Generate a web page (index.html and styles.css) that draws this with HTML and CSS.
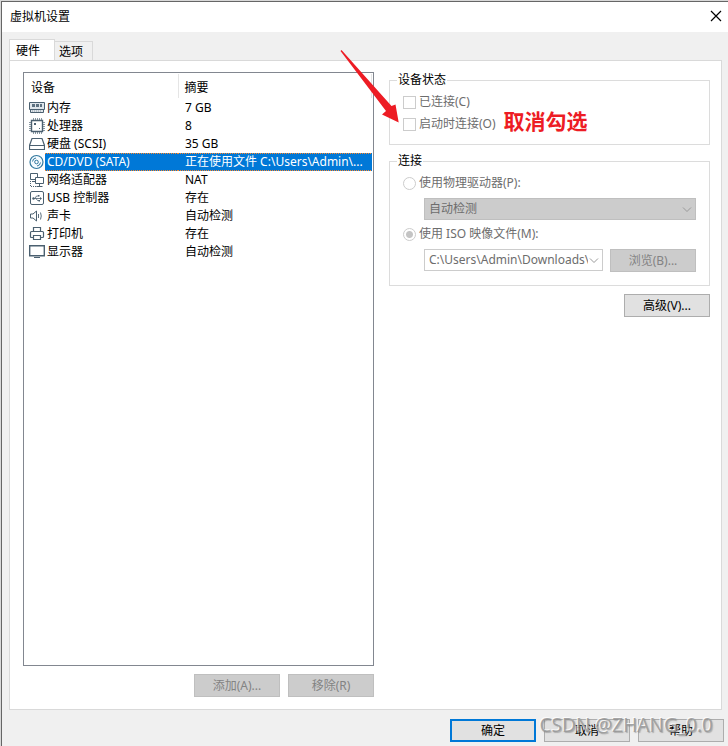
FILE: index.html
```html
<!DOCTYPE html>
<html lang="zh-CN">
<head>
<meta charset="utf-8">
<title>虚拟机设置</title>
<link rel="stylesheet" href="styles.css">
</head>
<body>
<div class="window">
  <header class="titlebar">
    <h1 class="title">虚拟机设置</h1>
    <button class="close" type="button" aria-label="关闭">
      <svg width="12" height="12" viewBox="0 0 12 12"><path d="M1 1l10 10M11 1L1 11" fill="none" stroke="#000" stroke-width="1.2"/></svg>
    </button>
  </header>

  <main class="body">
    <nav class="tabs">
      <button class="tab active" type="button">硬件</button>
      <button class="tab" type="button">选项</button>
    </nav>

    <div class="panel">
      <section class="devices">
        <div class="list">
          <table>
            <thead>
              <tr><th class="device">设备</th><th class="summary">摘要</th></tr>
            </thead>
            <tbody>
              <tr><td><div class="cell"><svg class="icon" viewBox="0 0 16 16"><path d="M.5 2.500h15v7H.5zM1.500 9.500v3h13v-3" fill="#dfe5ea" stroke="#4b6070"/><path d="M3 4h3v3H3zM7 4h3v3H7zM11 4h2v3h-2z" fill="#5d7180"/><path d="M3 11h10" stroke="#8d9ba6" stroke-dasharray="1 1"/></svg><span class="name">内存</span></div></td><td>7 GB</td></tr>
              <tr><td><div class="cell"><svg class="icon" viewBox="0 0 16 16"><path d="M4.500 0v16M6.500 0v16M8.500 0v16M10.500 0v16M12.500 0v16M0 4.500h16M0 6.500h16M0 8.500h16M0 10.500h16M0 12.500h16" stroke="#6c7d8a" stroke-width=".8"/><path d="M2.500 2.500h11v11h-11z" fill="#fff" stroke="#4b6070" stroke-width="1.400"/><path d="M5 5h2v2H5zM10 10h1v1h-1z" fill="#4b6070"/></svg><span class="name">处理器</span></div></td><td>8</td></tr>
              <tr><td><div class="cell"><svg class="icon" viewBox="0 0 16 16"><path d="M.5 9.500L3 2.500h10l2.500 7v4H.5zM.5 9.500h15" fill="#fff" stroke="#4b6070" stroke-width="1.200"/></svg><span class="name">硬盘 (SCSI)</span></div></td><td>35 GB</td></tr>
              <tr class="selected"><td><div class="cell"><svg class="icon" viewBox="0 0 16 16"><circle cx="7.500" cy="8" r="6.500" fill="#f5fbff" stroke="#33799f" stroke-width="1.200"/><circle cx="7.500" cy="8" r="1.800" fill="#fff" stroke="#33799f"/><path d="M3.500 7.500a4 4 0 0 1 3.500-3.500M11.500 8.500a4 4 0 0 1-3.500 3.500" fill="none" stroke="#33799f"/></svg><span class="name">CD/DVD (SATA)</span></div></td><td>正在使用文件 C:\Users\Admin\...</td></tr>
              <tr><td><div class="cell"><svg class="icon" viewBox="0 0 16 16"><path d="M1.500 1.500h7v6h-7zM3 9.500h3" fill="#fff" stroke="#4b6070"/><path d="M6.500 5.500h8v6h-8zM10.500 11.500v3M7.500 14.500h6" fill="#fff" stroke="#4b6070"/><path d="M1.500 9v5.500H7" fill="none" stroke="#4b6070" stroke-dasharray="1 1"/></svg><span class="name">网络适配器</span></div></td><td>NAT</td></tr>
              <tr><td><div class="cell"><svg class="icon" viewBox="0 0 16 16"><rect x="1.500" y="1.500" width="13" height="13" rx="1.500" fill="#fff" stroke="#4b6070"/><path d="M4 8.500h8M6 8.500l1.500-2.500h2M7 8.500l1.500 2h2" fill="none" stroke="#4b6070" stroke-width=".8"/><circle cx="4.500" cy="8.500" r="1.200" fill="#4b6070"/><path d="M11 7l2 1.500-2 1.500zM9 5h1.500v1.500H9zM9.500 10H11v1.500H9.500z" fill="#4b6070"/></svg><span class="name">USB 控制器</span></div></td><td>存在</td></tr>
              <tr><td><div class="cell"><svg class="icon" viewBox="0 0 16 16"><path d="M1.500 6H4l3.500-3v10L4 10H1.500z" fill="#fff" stroke="#4b6070"/><path d="M9.500 6v4M11.500 4.500q1.500 3.500 0 7" fill="none" stroke="#4b6070" stroke-width=".9"/></svg><span class="name">声卡</span></div></td><td>自动检测</td></tr>
              <tr><td><div class="cell"><svg class="icon" viewBox="0 0 16 16"><path d="M4.500 5.500v-4h7v4M4 11.500H2.500q-1 0-1-1v-4q0-1 1-1h11q1 0 1 1v4q0 1-1 1H12M4.500 9.500h7v4h-7z" fill="#fff" stroke="#4b6070" stroke-width="1.200"/></svg><span class="name">打印机</span></div></td><td>存在</td></tr>
              <tr><td><div class="cell"><svg class="icon" viewBox="0 0 16 16"><path d="M.7 1.700h14.600v10H.7z" fill="#fff" stroke="#4b6070" stroke-width="1.400"/><path d="M5 13.500h6" stroke="#4b6070"/></svg><span class="name">显示器</span></div></td><td>自动检测</td></tr>
            </tbody>
          </table>
        </div>
        <div class="actions">
          <button class="btn" type="button" disabled>添加(A)...</button>
          <button class="btn" type="button" disabled>移除(R)</button>
        </div>
      </section>

      <section class="settings">
        <fieldset class="group">
          <legend>设备状态</legend>
          <label class="option"><input type="checkbox" disabled>已连接(C)</label>
          <div class="option">
            <label class="option"><input type="checkbox" disabled>启动时连接(O)</label>
            <strong class="note">取消勾选</strong>
          </div>
          <svg class="arrow" width="62" height="76" viewBox="0 0 62 76"><path d="M2.500 2L52.500 58l4-1.500 3.200 18L43 66.500l4-3.500L1.500 3z" fill="#ed1c24"/></svg>
        </fieldset>

        <fieldset class="group connection">
          <legend>连接</legend>
          <label class="option"><input type="radio" name="source" disabled>使用物理驱动器(P):</label>
          <div class="field">
            <div class="combo filled">
              <select aria-label="物理驱动器" disabled><option>自动检测</option></select>
              <svg class="chevron" width="10" height="6" viewBox="0 0 10 6"><path d="M1 .5l4 4 4-4"/></svg>
            </div>
          </div>
          <label class="option"><input type="radio" name="source" checked disabled>使用 ISO 映像文件(M):</label>
          <div class="field">
            <div class="combo">
              <select aria-label="ISO 映像文件" disabled><option>C:\Users\Admin\Downloads\</option></select>
              <svg class="chevron" width="10" height="6" viewBox="0 0 10 6"><path d="M1 .5l4 4 4-4"/></svg>
            </div>
            <button class="btn" type="button" disabled>浏览(B)...</button>
          </div>
        </fieldset>
        <button class="btn advanced" type="button">高级(V)...</button>
      </section>
    </div>
  </main>

  <footer class="footer">
    <button class="btn primary" type="button">确定</button>
    <button class="btn" type="button">取消</button>
    <button class="btn" type="button">帮助</button>
    <span class="watermark">CSDN @ZHANG_0.0</span>
  </footer>
</div>
</body>
</html>
```

FILE: styles.css
```css
* {
  box-sizing: border-box;
}

body {
  margin: 0;
  background: #d8d8d8;
  color: #000;
  font: 12px/18px "Noto Sans", "Noto Sans CJK SC", sans-serif;
}

button,
select,
input {
  margin: 0;
  font: inherit;
}

.window {
  display: flex;
  flex-direction: column;
  min-height: calc(100vh - 1px);
  margin: 1px 0 0 1px;
  border: solid #666;
  border-width: 1px 0 0 1px;
  background: #f0f0f0;
}

.titlebar {
  display: flex;
  align-items: center;
  justify-content: space-between;
  height: 30px;
  padding: 0 6px 2px 8px;
  background: #fff;
}

.title {
  margin: 0;
  padding-top: 2px;
  font-size: 12px;
  font-weight: 400;
}

.close {
  display: flex;
  padding: 0;
  border: 0;
  background: none;
}

.body {
  display: flex;
  flex: 1;
  flex-direction: column;
  padding: 7px 6px 0 7px;
}

.tabs {
  display: flex;
  align-items: flex-end;
}

.tab {
  height: 19px;
  padding: 2px 9px 0 4px;
  border: 1px solid #d9d9d9;
  border-width: 1px 1px 0 0;
  background: #f0f0f0;
  color: #000;
  line-height: 16px;
}

.tab.active {
  height: 22px;
  margin-bottom: -1px;
  padding: 0 14px 0 6px;
  border-left-width: 1px;
  background: #fff;
}

.panel {
  display: flex;
  flex: 1;
  gap: 15px;
  padding: 11px 11px 12px 13px;
  border: 1px solid #d9d9d9;
  background: #fff;
}

.devices {
  display: flex;
  flex: 351;
  flex-direction: column;
  gap: 8px;
  min-width: 0;
}

.list {
  flex: 1;
  padding: 1px;
  border: 1px solid #828790;
}

table {
  width: 100%;
  border-collapse: collapse;
  table-layout: fixed;
}

th {
  height: 24px;
  padding: 4px 6px 0;
  border-right: 1px solid #e5e5e5;
  font-weight: 400;
  text-align: left;
}

.device {
  width: 153px;
}

tbody::before {
  content: "";
  display: block;
  height: 1px;
}

td {
  height: 18px;
  padding: 0 7px;
  overflow: hidden;
  white-space: nowrap;
}

td:first-child {
  padding: 0 0 0 4px;
}

.cell {
  display: flex;
  align-items: center;
}

.icon {
  flex: none;
  width: 16px;
  height: 16px;
}

.name {
  flex: 1;
  height: 18px;
  padding-left: 2px;
}

.selected .name,
.selected td:last-child {
  background:
    repeating-linear-gradient(90deg, #ff8728 0 1px, #0078d7 1px 2px) top / 100% 1px no-repeat,
    repeating-linear-gradient(90deg, #ff8728 0 1px, #0078d7 1px 2px) bottom / 100% 1px no-repeat,
    #0078d7;
  color: #fff;
}

.actions {
  display: flex;
  justify-content: flex-end;
  gap: 8px;
}

.btn {
  flex: none;
  width: 86px;
  height: 23px;
  padding: 0;
  border: 1px solid #adadad;
  background: #e1e1e1;
  color: #000;
}

.btn:disabled {
  border-color: #bfbfbf;
  background: #ccc;
  color: #838383;
}

.settings {
  display: flex;
  flex: 321;
  flex-direction: column;
  gap: 8px;
  min-width: 0;
}

.group {
  position: relative;
  min-width: 0;
  margin: 0;
  padding: 3px 13px 9px;
  border: 1px solid #dcdcdc;
}

.connection {
  padding-bottom: 10px;
}

legend {
  height: 16px;
  margin-left: -6px;
  padding: 0 1px;
  line-height: 16px;
}

.option {
  display: flex;
  align-items: center;
  gap: 3px;
  height: 22px;
  color: #6d6d6d;
}

input {
  flex: none;
  width: 13px;
  height: 13px;
  border: 1px solid #ccc;
  background: #fff;
  appearance: none;
}

input[type="radio"] {
  border-radius: 50%;
}

input[type="radio"]:checked {
  background: radial-gradient(circle, #c4c4c4 0 3px, #fff 4px);
}

.note {
  padding: 0 0 6px 5px;
  color: #ed1c24;
  font-size: 21px;
  font-weight: 700;
}

.arrow {
  position: absolute;
  right: 308px;
  bottom: 20px;
}

.field {
  display: flex;
  gap: 7px;
  padding: 4px 0 3px 21px;
}

.combo {
  display: flex;
  position: relative;
  flex: 1;
  min-width: 0;
}

.combo select {
  flex: 1;
  min-width: 0;
  height: 22px;
  padding: 0 14px 0 4px;
  border: 1px solid #ccc;
  border-radius: 0;
  background: #fff;
  color: #6d6d6d;
  opacity: 1;
  appearance: none;
}

.combo.filled select {
  border-color: #bfbfbf;
  background: #ccc;
}

.chevron {
  position: absolute;
  top: 9px;
  right: 4px;
  fill: none;
  stroke: #999;
}

.advanced {
  align-self: flex-end;
}

.footer {
  display: flex;
  position: relative;
  justify-content: flex-end;
  gap: 8px;
  padding: 9px 4px 4px;
}

.primary {
  border: 2px solid #0078d7;
}

.watermark {
  position: absolute;
  top: 3px;
  right: 15px;
  color: rgba(150, 150, 150, 0.85);
  font-size: 19px;
  line-height: 24px;
  text-shadow: -1px -1px 0 rgba(255, 255, 255, 0.8), 1px 1px 1px rgba(120, 120, 120, 0.5);
  pointer-events: none;
}
```
